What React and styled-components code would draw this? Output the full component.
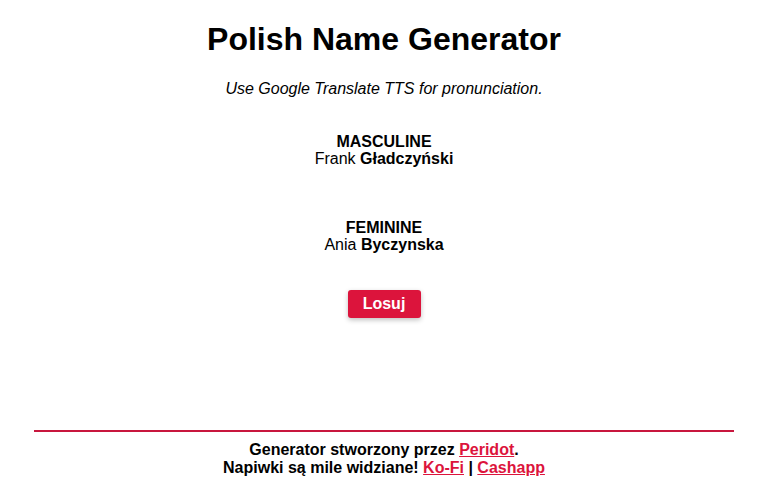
import React from "react";
import styled, { createGlobalStyle } from "styled-components";

const Global = createGlobalStyle`
  html, body { margin: 0; padding: 0; background: #fff; }
  body { font-family: "Liberation Sans", Arial, sans-serif; color: #000; }
`;

const Page = styled.div`
  display: flex;
  flex-direction: column;
  align-items: center;
  height: 480px;
  text-align: center;
`;

const Title = styled.h1`
  margin: 21px 0 0;
  font-size: 32px;
  line-height: 37px;
  font-weight: bold;
`;

const Subtitle = styled.p`
  margin: 22px 0 0;
  font-size: 16px;
  line-height: 18px;
  font-style: italic;
`;

const Block = styled.section`
  margin-top: ${(p) => p.$gap}px;
  font-size: 16px;
  line-height: 17px;
`;

const Label = styled.div`
  font-weight: bold;
`;

const Surname = styled.b`
  font-weight: bold;
`;

const Button = styled.button`
  margin-top: 37px;
  width: 73px;
  height: 28px;
  border: none;
  border-radius: 3px;
  background: #dc143c;
  color: #fff;
  font-family: "Liberation Sans", Arial, sans-serif;
  font-size: 16px;
  font-weight: bold;
  box-shadow: 0 2px 5px rgba(0, 0, 0, 0.25);
  cursor: pointer;
`;

const Footer = styled.footer`
  margin-top: auto;
  margin-bottom: 3px;
  width: 700px;
  border-top: 2px solid #c8173e;
  padding-top: 9px;
  font-size: 16px;
  line-height: 18px;
  font-weight: bold;
`;

const Link = styled.a`
  color: #dc143c;
  text-decoration: underline;
`;

export default function App() {
  return (
    <>
      <Global />
      <Page>
        <Title>Polish Name Generator</Title>
        <Subtitle>Use Google Translate TTS for pronunciation.</Subtitle>
        <Block $gap={35}>
          <Label>MASCULINE</Label>
          <div>
            Frank <Surname>Gładczyński</Surname>
          </div>
        </Block>
        <Block $gap={52}>
          <Label>FEMININE</Label>
          <div>
            Ania <Surname>Byczynska</Surname>
          </div>
        </Block>
        <Button>Losuj</Button>
        <Footer>
          <div>
            Generator stworzony przez <Link href="#">Peridot</Link>.
          </div>
          <div>
            Napiwki są mile widziane! <Link href="#">Ko-Fi</Link> |{" "}
            <Link href="#">Cashapp</Link>
          </div>
        </Footer>
      </Page>
    </>
  );
}
